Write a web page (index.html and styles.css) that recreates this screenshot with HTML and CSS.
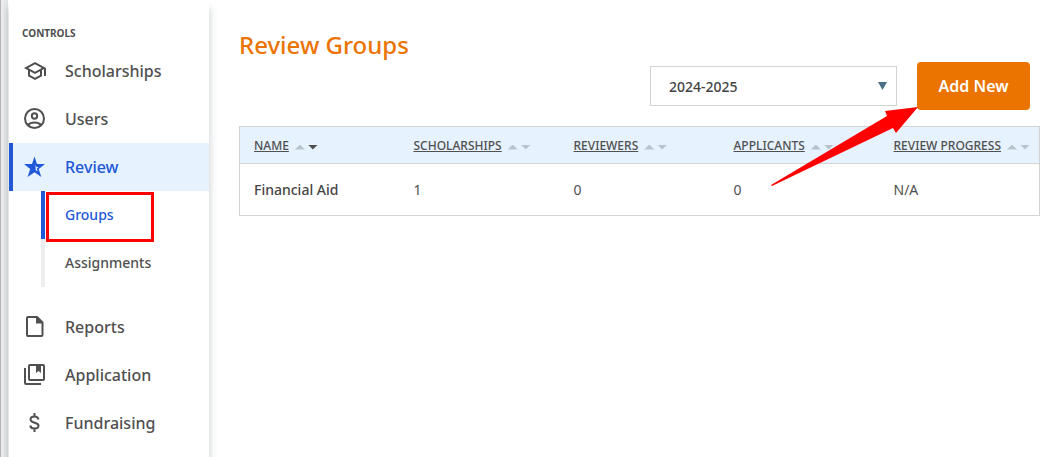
FILE: index.html
```html
<!DOCTYPE html>
<html lang="en">
  <head>
    <meta charset="UTF-8" />
    <meta name="viewport" content="width=device-width, initial-scale=1.0" />
    <title>Review Groups</title>
    <link rel="stylesheet" href="styles.css">
  </head>
  <body>
    <!-- Side navigation -->
    <nav class="sidebar">
      <h2 class="sidebar-title">Controls</h2>
      <ul class="menu">
        <li>
          <a class="menu-link" href="#">
            <svg class="menu-icon" viewBox="0 0 24 24"><path d="M12 3 1 9l4 2.180v6L12 21l7-3.820v-6l2-1.090V17h2V9L12 3zm6.820 6L12 12.720 5.180 9 12 5.280 18.820 9zM17 16l-5 2.720L7 16v-3.730L12 15l5-2.730V16z" /></svg>
            Scholarships
          </a>
        </li>
        <li>
          <a class="menu-link" href="#">
            <svg class="menu-icon line" viewBox="0 0 24 24"><circle cx="11.500" cy="11.500" r="9.500" /><circle cx="11.500" cy="9" r="2.700" /><path d="M5 18c1.500-1.700 4-2.500 6.500-2.500s5 .8 6.500 2.500" /></svg>
            Users
          </a>
        </li>
        <li>
          <a class="menu-link active" href="#">
            <svg class="menu-icon" viewBox="0 0 24 24"><path fill-rule="evenodd" d="M11.500 1.500 14 9H22l-6.300 5 2.600 8L11.500 17.300 4.600 22l2.600-8L1 9h8zM12.600 9.500v5.500l2 1.400-.8-2.800 1.900-1.500h-2.200z" /></svg>
            Review
          </a>
          <ul class="submenu">
            <li><a class="submenu-link active" href="#">Groups</a></li>
            <li><a class="submenu-link" href="#">Assignments</a></li>
          </ul>
        </li>
        <li>
          <a class="menu-link" href="#">
            <svg class="menu-icon" viewBox="0 0 24 24"><path fill-rule="evenodd" d="M5 1h9.500l6 6v13a2 2 0 0 1-2 2H5a2 2 0 0 1-2-2V3a2 2 0 0 1 2-2zm0 2v17h13.500V8.500H13V3z" /></svg>
            Reports
          </a>
        </li>
        <li>
          <a class="menu-link" href="#">
            <svg class="menu-icon" viewBox="0 0 24 24"><path fill-rule="evenodd" d="M7 1h13a2 2 0 0 1 2 2v13a2 2 0 0 1-2 2H7a2 2 0 0 1-2-2V3a2 2 0 0 1 2-2zm0 2v13h13V3h-2v7l-2.500-2L13 10V3z" /><path d="M1 5h2v15h15v2H3a2 2 0 0 1-2-2z" /></svg>
            Application
          </a>
        </li>
        <li>
          <a class="menu-link" href="#">
            <svg class="menu-icon line" viewBox="0 0 24 24"><path d="M11.500 2v4M11.500 17v4M15.500 8.500c-.3-1.800-1.700-3-4-3s-4 1.200-4 3c0 4 8 2.500 8 6 0 2-1.700 3-4 3s-4-1.200-4.300-3" /></svg>
            Fundraising
          </a>
        </li>
      </ul>
    </nav>

    <main class="content">
      <h1>Review Groups</h1>
      <div class="toolbar">
        <div class="year">
          <select aria-label="Year">
            <option>2024-2025</option>
          </select>
        </div>
        <div class="add">
          <button class="add-button" type="button">Add New</button>
          <svg class="arrow" viewBox="0 0 147 79"><path d="M0 78 116 9 114 4 147 0 125 26 122 21 1 79z" /></svg>
        </div>
      </div>

      <table class="groups">
        <thead>
          <tr>
            <th><a href="#">NAME</a><span class="sort"><i class="up"></i><i class="down on"></i></span></th>
            <th><a href="#">SCHOLARSHIPS</a><span class="sort"><i class="up"></i><i class="down"></i></span></th>
            <th><a href="#">REVIEWERS</a><span class="sort"><i class="up"></i><i class="down"></i></span></th>
            <th><a href="#">APPLICANTS</a><span class="sort"><i class="up"></i><i class="down"></i></span></th>
            <th><a href="#">REVIEW PROGRESS</a><span class="sort"><i class="up"></i><i class="down"></i></span></th>
          </tr>
        </thead>
        <tbody>
          <tr>
            <td class="name">Financial Aid</td>
            <td>1</td>
            <td>0</td>
            <td>0</td>
            <td>N/A</td>
          </tr>
        </tbody>
      </table>
    </main>
  </body>
</html>
```
FILE: styles.css
```css
*,
*::before,
*::after {
  margin: 0;
  padding: 0;
  box-sizing: border-box;
}

body {
  display: flex;
  min-height: 100vh;
  padding-left: 8px;
  border-left: 1px solid #b5b3b5;
  background: linear-gradient(to right, #f2f1f1, #e0e3e4 8px, #fff 8px);
  color: #505050;
  font-family: 'Noto Sans', 'Open Sans', sans-serif;
  font-size: 14px;
}

ul {
  list-style: none;
}

a {
  color: inherit;
  text-decoration: none;
}

/* Side navigation */
.sidebar {
  flex: none;
  width: 200px;
  padding-top: 20px;
  background: #fff;
  box-shadow: 0 8px 8px rgba(60, 80, 90, 0.3);
}

.sidebar-title {
  padding: 0 13px;
  font-size: 10px;
  font-weight: 700;
  line-height: 27px;
  text-transform: uppercase;
}

.menu-link {
  display: flex;
  align-items: center;
  gap: 18px;
  height: 48px;
  padding-left: 10px;
  border-left: 4px solid transparent;
  font-size: 16px;
  font-weight: 500;
}

.menu-link.active {
  border-color: #2158d8;
  background: #e6f2fe;
  color: #2158d8;
}

.menu-icon {
  width: 24px;
  height: 24px;
  fill: currentColor;
}

.menu-icon.line {
  fill: none;
  stroke: currentColor;
  stroke-width: 2;
}

.submenu {
  margin: 0 0 16px 32px;
}

.submenu-link {
  display: block;
  position: relative;
  height: 48px;
  padding-left: 20px;
  border-left: 4px solid #eee;
  font-weight: 500;
  line-height: 48px;
}

.submenu-link.active {
  border-color: #2158d8;
  color: #2158d8;
}

/* Red frame around the current page */
.submenu-link.active::after {
  content: '';
  position: absolute;
  top: 1px;
  left: 1px;
  width: 108px;
  height: 50px;
  border: 3px solid #f00;
}

/* Page content */
.content {
  flex: 1;
  min-width: 0;
  padding: 30px 10px 30px 30px;
}

h1 {
  margin-bottom: 2px;
  color: #eb7300;
  font-size: 24px;
  font-weight: 500;
  line-height: 30px;
}

.toolbar {
  display: flex;
  align-items: center;
  justify-content: flex-end;
  gap: 20px;
  margin-bottom: 16px;
  padding-right: 10px;
}

.year {
  position: relative;
  width: 247px;
}

.year select {
  display: block;
  width: 100%;
  height: 40px;
  padding: 0 18px;
  border: 1px solid #d3d3d3;
  appearance: none;
  background: #fff;
  color: #444;
  font: 500 14px 'Noto Sans', 'Open Sans', sans-serif;
}

.year::after {
  content: '';
  position: absolute;
  top: 16px;
  right: 10px;
  width: 9px;
  height: 8px;
  background: #4a7085;
  clip-path: polygon(0 0, 100% 0, 50% 100%);
  pointer-events: none;
}

.add {
  position: relative;
}

.add-button {
  width: 113px;
  height: 48px;
  border: none;
  border-radius: 4px;
  background: #eb7300;
  color: #fff;
  font: 600 16px 'Noto Sans', 'Open Sans', sans-serif;
}

.arrow {
  position: absolute;
  top: 45px;
  right: 112px;
  width: 147px;
  height: 79px;
  fill: #f00;
  pointer-events: none;
}

.groups {
  width: 100%;
  border: 1px solid #d3d3d3;
  border-collapse: collapse;
  table-layout: fixed;
}

.groups th,
.groups td {
  padding-left: 14px;
  text-align: left;
  white-space: nowrap;
}

.groups th {
  height: 37px;
  border-bottom: 1px solid #d3d3d3;
  background: #e6f2fe;
  font-size: 12px;
  font-weight: 500;
}

.groups th a {
  text-decoration: underline;
}

.groups td {
  height: 52px;
}

.groups .name {
  color: #444;
  font-weight: 500;
}

/* Sort triangles */
.sort {
  display: inline-flex;
  gap: 3px;
  margin-left: 6px;
}

.up,
.down {
  width: 10px;
  height: 5px;
  background: #bac3cc;
}

.up {
  clip-path: polygon(50% 0, 100% 100%, 0 100%);
}

.down {
  clip-path: polygon(0 0, 100% 0, 50% 100%);
}

.down.on {
  background: #505050;
}
```
